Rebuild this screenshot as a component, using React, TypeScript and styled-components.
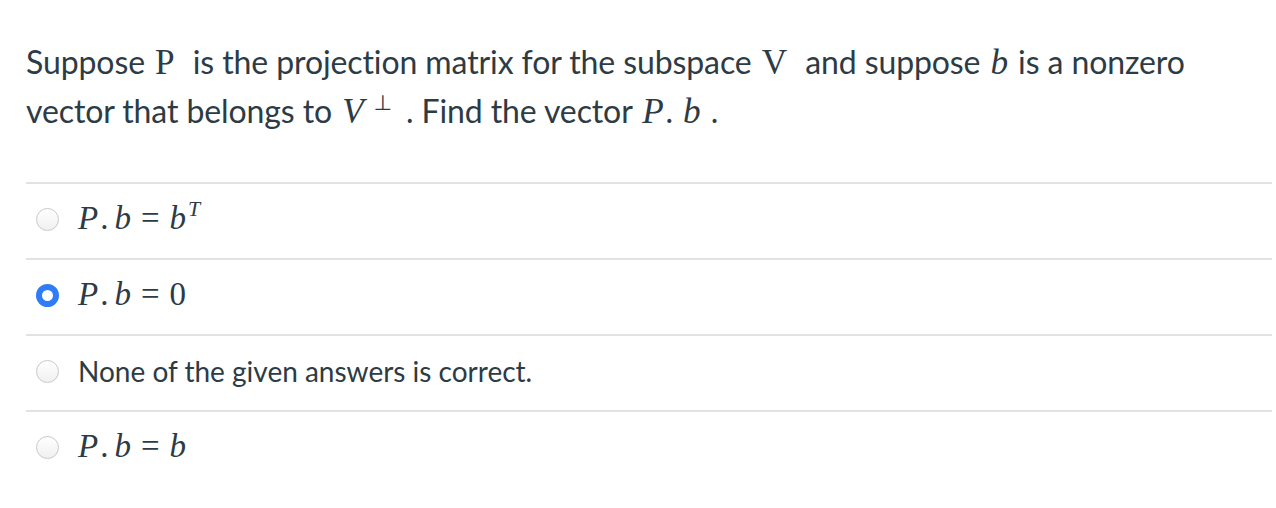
import React from 'react';
import styled, { createGlobalStyle } from 'styled-components';

const GlobalStyle = createGlobalStyle`
  body {
    margin: 0;
    background: #fff;
    font-family: Lato, "Open Sans", sans-serif;
    color: #2d3b45;
  }
`;

interface Option {
  id: string;
  selected?: boolean;
  content: React.ReactNode;
}

const Page = styled.div`
  padding: 38px 4px 0 26px;
`;

const Question = styled.div`
  font-size: 32px;
  line-height: 48px;
  margin-bottom: 46px;
  letter-spacing: -0.1px;
`;

const M = styled.span<{ $upright?: boolean }>`
  font-family: "Liberation Serif", "DejaVu Serif", serif;
  font-style: ${(p) => (p.$upright ? 'normal' : 'italic')};
  font-size: 1.1em;
  margin: 0 2px;
`;

const Perp = styled.sup`
  font-family: "DejaVu Sans", sans-serif;
  font-size: 0.66em;
  vertical-align: 0.62em;
  line-height: 0;
  margin: 0 6px 0 8px;
`;

const List = styled.ul`
  list-style: none;
  margin: 0;
  padding: 0;
`;

const Row = styled.li`
  display: flex;
  align-items: center;
  height: 71px;
  border-top: 2px solid #e2e2e2;
  padding: 0 0 3px 10px;
  box-sizing: content-box;
`;

const Radio = styled.span<{ $on?: boolean }>`
  box-sizing: border-box;
  width: 23px;
  height: 23px;
  border-radius: 50%;
  flex: none;
  margin-right: 19px;
  border: ${(p) => (p.$on ? '6.5px solid #2f7cf6' : '1.5px solid #c8c8c8')};
  background: ${(p) => (p.$on ? '#fff' : 'linear-gradient(#fff, #f0f0f0)')};
`;

const Label = styled.span`
  font-size: 28px;
  margin-bottom: 2px;
`;

const Eq = styled.span`
  font-family: "Liberation Serif", "DejaVu Serif", serif;
  font-size: 33px;
  white-space: nowrap;
  margin-bottom: 2px;
  i {
    font-style: italic;
  }
`;

const Dot = styled.span`
  display: inline-block;
  margin: 0 6px 0 2px;
`;

const Rel = styled.span`
  display: inline-block;
  margin: 0 10px;
`;

const SupT = styled.sup`
  font-style: italic;
  font-size: 0.66em;
  line-height: 0;
  vertical-align: 0.62em;
  margin-left: 2px;
`;

function Pb() {
  return (
    <>
      <i>P</i>
      <Dot>.</Dot>
      <i>b</i>
      <Rel>=</Rel>
    </>
  );
}

const options: Option[] = [
  {
    id: 'a',
    content: (
      <Eq>
        <Pb />
        <i>b</i>
        <SupT>T</SupT>
      </Eq>
    ),
  },
  {
    id: 'b',
    selected: true,
    content: (
      <Eq>
        <Pb />
        <span>0</span>
      </Eq>
    ),
  },
  { id: 'c', content: <Label>None of the given answers is correct.</Label> },
  {
    id: 'd',
    content: (
      <Eq>
        <Pb />
        <i>b</i>
      </Eq>
    ),
  },
];

export default function App() {
  return (
    <>
      <GlobalStyle />
      <Page>
        <Question>
          Suppose <M $upright>P</M>&nbsp; is the projection matrix for the subspace <M $upright>V</M>&nbsp; and
          suppose <M>b</M> is a nonzero
          <br />
          vector that belongs to <M>V</M>
          <Perp>⊥</Perp>&nbsp;. Find the vector <M>P</M>. <M>b</M>&nbsp;.
        </Question>
        <List>
          {options.map((o) => (
            <Row key={o.id}>
              <Radio $on={o.selected} />
              {o.content}
            </Row>
          ))}
        </List>
      </Page>
    </>
  );
}
